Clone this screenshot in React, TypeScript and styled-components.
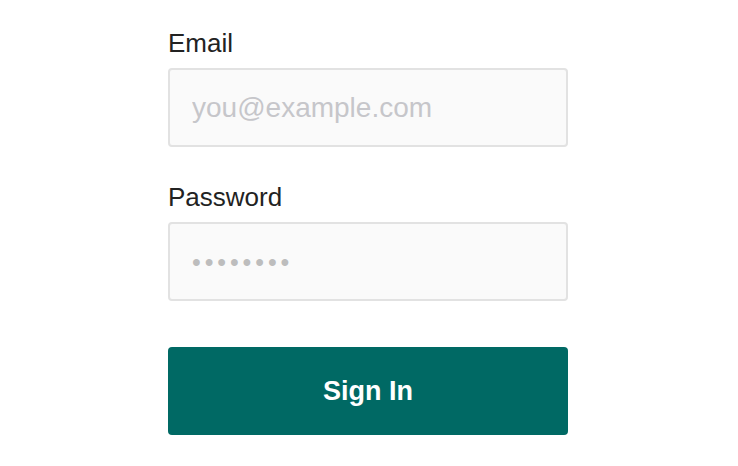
import styled, { createGlobalStyle } from 'styled-components';

const GlobalStyle = createGlobalStyle`
  html, body {
    margin: 0;
    padding: 0;
    background: #fff;
  }
  body {
    font-family: "Liberation Sans", Arial, Helvetica, sans-serif;
  }
`;

const Page = styled.div`
  display: flex;
  justify-content: center;
  padding: 28px 2px 0 0;
`;

const Form = styled.form`
  width: 400px;
  display: flex;
  flex-direction: column;
`;

const Field = styled.div`
  display: flex;
  flex-direction: column;
  gap: 9px;
  margin-bottom: 35px;
`;

const Label = styled.label`
  font-size: 26px;
  line-height: 31px;
  color: #222;
`;

const Input = styled.input<{ $dots?: boolean }>`
  box-sizing: border-box;
  height: 79px;
  width: 100%;
  padding: 0 22px;
  border: 2px solid #e2e2e2;
  border-radius: 4px;
  background: #fafafa;
  font-family: inherit;
  font-size: 28px;
  color: #222;
  outline: none;

  &::placeholder {
    color: #c6c6ca;
    ${({ $dots }) =>
      $dots &&
      `
      font-size: 25px;
      letter-spacing: 3.9px;
      color: #bdbdbd;
    `}
  }
`;

const SubmitButton = styled.button`
  margin-top: 11px;
  height: 88px;
  width: 100%;
  border: none;
  border-radius: 4px;
  background: #006964;
  color: #fff;
  font-family: inherit;
  font-size: 27px;
  font-weight: 700;
  cursor: pointer;
`;

const App = () => {
  return (
    <>
      <GlobalStyle />
      <Page>
        <Form onSubmit={(e) => e.preventDefault()}>
          <Field>
            <Label htmlFor="email">Email</Label>
            <Input id="email" type="email" placeholder="you@example.com" />
          </Field>
          <Field>
            <Label htmlFor="password">Password</Label>
            <Input id="password" type="password" placeholder="••••••••" $dots />
          </Field>
          <SubmitButton type="submit">Sign In</SubmitButton>
        </Form>
      </Page>
    </>
  );
};

export default App;
